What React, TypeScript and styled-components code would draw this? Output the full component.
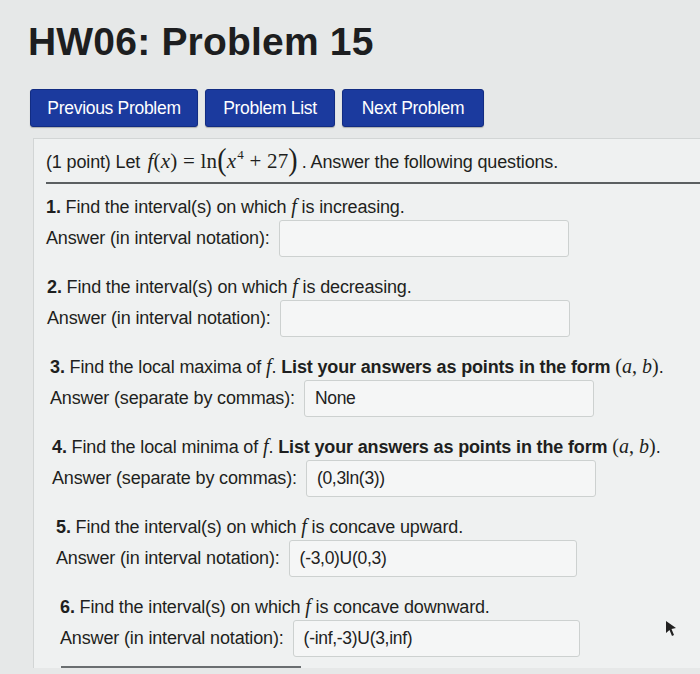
import React from "react";
import styled, { createGlobalStyle } from "styled-components";

const Global = createGlobalStyle`
  html, body { margin: 0; padding: 0; }
  body {
    background: #e6e8e8;
    font-family: "Liberation Sans", Arial, sans-serif;
    color: #1e1f20;
    width: 700px;
    height: 674px;
    overflow: hidden;
  }
`;

const Page = styled.div`
  display: flex;
  flex-direction: column;
  padding: 21px 0 0 28px;
`;

const Title = styled.h1`
  margin: 0;
  font-size: 39px;
  font-weight: bold;
  letter-spacing: 0.2px;
  line-height: 42px;
  color: #1d1e20;
`;

const ButtonBar = styled.div`
  display: flex;
  gap: 7px;
  margin-top: 26px;
  margin-left: 2px;
`;

const NavButton = styled.button<{ $w: number }>`
  width: ${(p) => p.$w}px;
  height: 38px;
  background: #1b3a9e;
  border: 1px solid #122c82;
  border-radius: 3px;
  color: #ffffff;
  font-family: "Liberation Sans", Arial, sans-serif;
  font-size: 17.5px;
  letter-spacing: -0.3px;
  padding: 0;
  box-shadow: 0 1px 1px rgba(0, 0, 0, 0.25);
`;

const Problem = styled.div`
  display: flex;
  flex-direction: column;
  margin-top: 11px;
  margin-left: 5px;
  padding-left: 12px;
  padding-top: 11px;
  background: #eff1f1;
  border-top: 1px solid #d2d5d5;
  border-left: 1px solid #d2d5d5;
`;

const Intro = styled.div`
  font-size: 18px;
  letter-spacing: -0.15px;
  line-height: 22px;
  padding-bottom: 9px;
  border-bottom: 2px solid #5b5f61;
  white-space: nowrap;
`;

const MathExpr = styled.span`
  font-family: "Liberation Serif", "Times New Roman", serif;
  font-size: 21px;
  letter-spacing: 0.2px;
  margin: 0 4px 0 2px;
`;

const M = styled.span`
  font-family: "Liberation Serif", "Times New Roman", serif;
  font-size: 20px;
  letter-spacing: 0;
`;

const MI = styled.i`
  font-family: "Liberation Serif", "Times New Roman", serif;
  font-style: italic;
`;

const BigParen = styled.span`
  font-size: 28px;
  line-height: 20px;
  display: inline-block;
  transform: scaleY(1.1);
  vertical-align: -1px;
`;

const Sup = styled.sup`
  font-size: 13px;
  vertical-align: 9px;
  line-height: 0;
  margin-left: 1px;
`;

const Questions = styled.div`
  display: flex;
  flex-direction: column;
  gap: 18px;
  padding-top: 11px;
`;

const Question = styled.div<{ $shift: number }>`
  display: flex;
  flex-direction: column;
  gap: 2px;
  padding-left: ${(p) => p.$shift}px;
`;

const QText = styled.div`
  font-size: 18px;
  letter-spacing: -0.15px;
  line-height: 22px;
  white-space: nowrap;
`;

const Num = styled.b`
  font-weight: bold;
`;

const Strong = styled.b`
  font-weight: bold;
`;

const AnswerRow = styled.div`
  display: flex;
  align-items: center;
  gap: 9px;
  font-size: 18px;
  letter-spacing: -0.15px;
  white-space: nowrap;
`;

const AnswerBox = styled.div<{ $w: number }>`
  width: ${(p) => p.$w}px;
  height: 37px;
  box-sizing: border-box;
  border: 1px solid #cdd1d0;
  border-radius: 3px;
  background: #f5f6f6;
  display: flex;
  align-items: center;
  padding-left: 10px;
  font-size: 17.5px;
  letter-spacing: -0.3px;
  color: #222;
`;

const BottomRule = styled.div`
  height: 2px;
  width: 240px;
  background: #6a6e70;
  margin-top: 9px;
  margin-left: 15px;
`;

const Cursor = styled.svg`
  position: absolute;
  left: 664px;
  top: 619px;
`;

const F = () => (
  <M>
    <MI>f</MI>
  </M>
);

const AB = () => (
  <M>
    (<MI>a</MI>, <MI>b</MI>)
  </M>
);

type Q = {
  n: number;
  body: React.ReactNode;
  label: string;
  value: string;
  shift: number;
  w: number;
};

const questions: Q[] = [
  {
    n: 1,
    body: (
      <>
        Find the interval(s) on which <F /> is increasing.
      </>
    ),
    label: "Answer (in interval notation):",
    value: "",
    shift: 0,
    w: 290,
  },
  {
    n: 2,
    body: (
      <>
        Find the interval(s) on which <F /> is decreasing.
      </>
    ),
    label: "Answer (in interval notation):",
    value: "",
    shift: 1,
    w: 290,
  },
  {
    n: 3,
    body: (
      <>
        Find the local maxima of <F />. <Strong>List your answers as points in the form</Strong> <AB />.
      </>
    ),
    label: "Answer (separate by commas):",
    value: "None",
    shift: 4,
    w: 290,
  },
  {
    n: 4,
    body: (
      <>
        Find the local minima of <F />. <Strong>List your answers as points in the form</Strong> <AB />.
      </>
    ),
    label: "Answer (separate by commas):",
    value: "(0,3ln(3))",
    shift: 6,
    w: 290,
  },
  {
    n: 5,
    body: (
      <>
        Find the interval(s) on which <F /> is concave upward.
      </>
    ),
    label: "Answer (in interval notation):",
    value: "(-3,0)U(0,3)",
    shift: 10,
    w: 288,
  },
  {
    n: 6,
    body: (
      <>
        Find the interval(s) on which <F /> is concave downward.
      </>
    ),
    label: "Answer (in interval notation):",
    value: "(-inf,-3)U(3,inf)",
    shift: 14,
    w: 287,
  },
];

export default function App() {
  return (
    <>
      <Global />
      <Page>
        <Title>HW06: Problem 15</Title>
        <ButtonBar>
          <NavButton $w={168}>Previous Problem</NavButton>
          <NavButton $w={130}>Problem List</NavButton>
          <NavButton $w={142}>Next Problem</NavButton>
        </ButtonBar>
        <Problem>
          <Intro>
            (1 point) Let
            <MathExpr>
              {" "}
              <MI>f</MI>(<MI>x</MI>) = ln<BigParen>(</BigParen>
              <MI>x</MI>
              <Sup>4</Sup> + 27<BigParen>)</BigParen>
            </MathExpr>
            . Answer the following questions.
          </Intro>
          <Questions>
            {questions.map((q) => (
              <Question key={q.n} $shift={q.shift}>
                <QText>
                  <Num>{q.n}.</Num> {q.body}
                </QText>
                <AnswerRow>
                  <span>{q.label}</span>
                  <AnswerBox $w={q.w}>{q.value}</AnswerBox>
                </AnswerRow>
              </Question>
            ))}
          </Questions>
          <BottomRule />
        </Problem>
        <Cursor width="14" height="20" viewBox="0 0 14 20">
          <path d="M2 2 L12 9 L7.5 10 L10 16 L8 17 L5.5 11 L2 14 Z" fill="#222" />
        </Cursor>
      </Page>
    </>
  );
}
